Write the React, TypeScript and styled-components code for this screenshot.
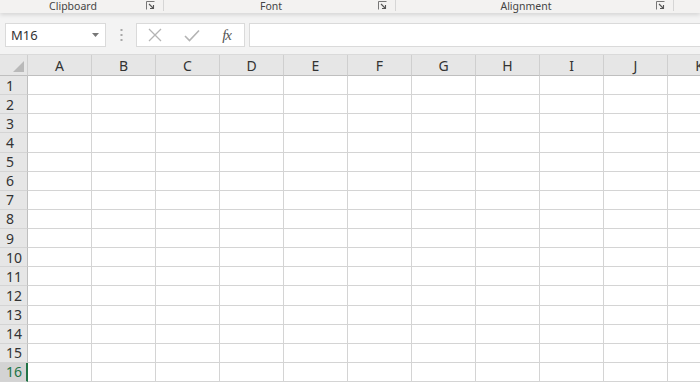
import React from "react";
import styled, { createGlobalStyle } from "styled-components";

const GlobalStyle = createGlobalStyle`
  html, body {
    margin: 0;
    padding: 0;
    background: #f3f3f3;
    overflow: hidden;
  }
  body {
    font-family: "Noto Sans", "Liberation Sans", sans-serif;
  }
`;

const Page = styled.div`
  width: 700px;
  height: 382px;
  overflow: hidden;
  display: flex;
  flex-direction: column;
  background: #f3f3f3;
`;

const Ribbon = styled.div`
  height: 13px;
  display: flex;
  background: #f3f2f1;
  box-shadow: 0 2px 4px rgba(0, 0, 0, 0.12);
  position: relative;
  z-index: 1;
  flex-shrink: 0;
`;

const Group = styled.div<{ $w: number }>`
  width: ${(p) => p.$w}px;
  flex-shrink: 0;
  display: flex;
  align-items: flex-start;
  border-right: 1px solid #d6d6d6;
  box-sizing: border-box;
  height: 11px;
`;

const GroupLabel = styled.div`
  flex: 1;
  text-align: center;
  font-size: 10.5px;
  line-height: 12px;
  color: #444444;
`;

const Launcher = styled.div`
  width: 14px;
  display: flex;
  align-items: center;
  justify-content: flex-start;
  margin-right: 3px;
  padding-top: 1px;
`;

const FormulaBar = styled.div`
  height: 41px;
  display: flex;
  align-items: center;
  padding-top: 3px;
  box-sizing: border-box;
  flex-shrink: 0;
`;

const NameBox = styled.div`
  margin-left: 5px;
  width: 101px;
  height: 24px;
  box-sizing: border-box;
  background: #ffffff;
  border: 1px solid #dadada;
  display: flex;
  align-items: center;
  justify-content: space-between;
  padding: 0 6px 0 5px;
  font-size: 13px;
  color: #333333;
`;

const Dots = styled.div`
  width: 30px;
  display: flex;
  justify-content: center;
`;

const FxBox = styled.div`
  width: 109px;
  height: 24px;
  box-sizing: border-box;
  background: #ffffff;
  border: 1px solid #dadada;
  display: flex;
  align-items: center;
  justify-content: space-between;
  padding: 0 13px 0 11px;
`;

const Fx = styled.span`
  font-family: "Liberation Serif", "DejaVu Serif", serif;
  font-style: italic;
  font-size: 15px;
  color: #555555;
  letter-spacing: -1px;
`;

const FormulaInput = styled.div`
  flex: 1;
  margin-left: 4px;
  height: 24px;
  box-sizing: border-box;
  background: #ffffff;
  border: 1px solid #dadada;
  border-right: none;
`;

const Sheet = styled.div`
  flex: 1;
  display: grid;
  grid-template-columns: 28px repeat(11, 64px);
  grid-template-rows: 21px repeat(16, 19.13px);
  background: #ffffff;
  border-top: 1px solid #dadada;
  overflow: hidden;
`;

const Corner = styled.div`
  background: #e6e6e6;
  border-right: 1px solid #cfcfcf;
  border-bottom: 1px solid #bfbfbf;
  box-sizing: border-box;
  display: flex;
  align-items: flex-end;
  justify-content: flex-end;
  padding: 0 3px 3px 0;
`;

const ColHead = styled.div`
  background: #e6e6e6;
  border-right: 1px solid #cfcfcf;
  border-bottom: 1px solid #bfbfbf;
  box-sizing: border-box;
  display: flex;
  align-items: center;
  justify-content: center;
  font-size: 14px;
  color: #333333;
  padding-top: 1px;
`;

const RowHead = styled.div<{ $active?: boolean }>`
  background: ${(p) => (p.$active ? "#d3d3d3" : "#e6e6e6")};
  border-right: ${(p) => (p.$active ? "2px solid #217346" : "1px solid #bfbfbf")};
  border-bottom: 1px solid #d4d4d4;
  box-sizing: border-box;
  display: flex;
  align-items: center;
  padding-left: 6px;
  font-size: 14px;
  color: ${(p) => (p.$active ? "#217346" : "#333333")};
`;

const Cell = styled.div`
  border-right: 1px solid #d4d4d4;
  border-bottom: 1px solid #d4d4d4;
  box-sizing: border-box;
`;

const LauncherIcon = () => (
  <svg width="9" height="9" viewBox="0 0 9 9">
    <path d="M0.5 8.5 V0.5 H8.5" stroke="#777" fill="none" strokeWidth="1" />
    <path d="M3 3 L7.5 7.5 M7.5 4 V7.5 H4" stroke="#555" fill="none" strokeWidth="1.1" />
  </svg>
);

const columns = ["A", "B", "C", "D", "E", "F", "G", "H", "I", "J", "K"];
const rows = Array.from({ length: 16 }, (_, i) => i + 1);

export default function App() {
  return (
    <Page>
      <GlobalStyle />
      <Ribbon>
        <Group $w={164}>
          <GroupLabel>Clipboard</GroupLabel>
          <Launcher>
            <LauncherIcon />
          </Launcher>
        </Group>
        <Group $w={232}>
          <GroupLabel>Font</GroupLabel>
          <Launcher>
            <LauncherIcon />
          </Launcher>
        </Group>
        <Group $w={278}>
          <GroupLabel>Alignment</GroupLabel>
          <Launcher>
            <LauncherIcon />
          </Launcher>
        </Group>
      </Ribbon>
      <FormulaBar>
        <NameBox>
          <span>M16</span>
          <svg width="7" height="4" viewBox="0 0 7 4">
            <path d="M0 0 H7 L3.5 4 Z" fill="#777" />
          </svg>
        </NameBox>
        <Dots>
          <svg width="3" height="12" viewBox="0 0 3 12">
            <rect x="0.5" y="0" width="2" height="2" fill="#a8a8a8" />
            <rect x="0.5" y="5" width="2" height="2" fill="#a8a8a8" />
            <rect x="0.5" y="10" width="2" height="2" fill="#a8a8a8" />
          </svg>
        </Dots>
        <FxBox>
          <svg width="14" height="14" viewBox="0 0 14 14">
            <path d="M1 1 L13 13 M13 1 L1 13" stroke="#b4b4b4" strokeWidth="1.3" fill="none" />
          </svg>
          <svg width="16" height="13" viewBox="0 0 16 13">
            <path d="M1 7 L5.5 11.5 L15 1.5" stroke="#b4b4b4" strokeWidth="1.6" fill="none" />
          </svg>
          <Fx>fx</Fx>
        </FxBox>
        <FormulaInput />
      </FormulaBar>
      <Sheet>
        <Corner>
          <svg width="11" height="11" viewBox="0 0 11 11">
            <path d="M11 0 V11 H0 Z" fill="#b9b9b9" />
          </svg>
        </Corner>
        {columns.map((c) => (
          <ColHead key={c}>{c}</ColHead>
        ))}
        {rows.map((r) => (
          <React.Fragment key={r}>
            <RowHead $active={r === 16}>{r}</RowHead>
            {columns.map((c) => (
              <Cell key={c + r} />
            ))}
          </React.Fragment>
        ))}
      </Sheet>
    </Page>
  );
}
